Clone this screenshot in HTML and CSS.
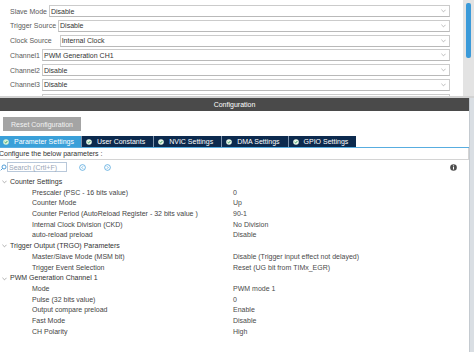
FILE: index.html
```html
<!DOCTYPE html>
<html>
<head>
<meta charset="utf-8">
<link rel="stylesheet" href="styles.css">
</head>
<body>
<div class="top">
  <div class="modes">
    <div class="mode-row"><span class="mode-label">Slave Mode</span><div class="select">Disable<svg class="chev" viewBox="0 0 6 4"><polyline points="0.5,0.5 3,3 5.5,0.5"/></svg></div></div>
    <div class="mode-row"><span class="mode-label">Trigger Source</span><div class="select">Disable<svg class="chev" viewBox="0 0 6 4"><polyline points="0.5,0.5 3,3 5.5,0.5"/></svg></div></div>
    <div class="mode-row"><span class="mode-label wide">Clock Source</span><div class="select">Internal Clock<svg class="chev" viewBox="0 0 6 4"><polyline points="0.5,0.5 3,3 5.5,0.5"/></svg></div></div>
    <div class="mode-row"><span class="mode-label">Channel1</span><div class="select">PWM Generation CH1<svg class="chev" viewBox="0 0 6 4"><polyline points="0.5,0.5 3,3 5.5,0.5"/></svg></div></div>
    <div class="mode-row"><span class="mode-label">Channel2</span><div class="select">Disable<svg class="chev" viewBox="0 0 6 4"><polyline points="0.5,0.5 3,3 5.5,0.5"/></svg></div></div>
    <div class="mode-row"><span class="mode-label">Channel3</span><div class="select">Disable<svg class="chev" viewBox="0 0 6 4"><polyline points="0.5,0.5 3,3 5.5,0.5"/></svg></div></div>
    <div class="mode-row"><span class="mode-label">Channel4</span><div class="select">Disable<svg class="chev" viewBox="0 0 6 4"><polyline points="0.5,0.5 3,3 5.5,0.5"/></svg></div></div>
  </div>
  <div class="vscroll"><div class="thumb"></div></div>
</div>
<div class="lower">
  <div class="lower-main">
    <div class="config-title">Configuration</div>
    <button class="reset-btn">Reset Configuration</button>
    <div class="tabs">
      <div class="tab active"><svg class="tab-ico" viewBox="0 0 6 6"><circle cx="3" cy="3" r="2.8"/><polyline points="1.6,3.1 2.6,4 4.4,2"/></svg>Parameter Settings</div>
      <div class="tab"><svg class="tab-ico" viewBox="0 0 6 6"><circle cx="3" cy="3" r="2.8"/><polyline points="1.6,3.1 2.6,4 4.4,2"/></svg>User Constants</div>
      <div class="tab"><svg class="tab-ico" viewBox="0 0 6 6"><circle cx="3" cy="3" r="2.8"/><polyline points="1.6,3.1 2.6,4 4.4,2"/></svg>NVIC Settings</div>
      <div class="tab"><svg class="tab-ico" viewBox="0 0 6 6"><circle cx="3" cy="3" r="2.8"/><polyline points="1.6,3.1 2.6,4 4.4,2"/></svg>DMA Settings</div>
      <div class="tab"><svg class="tab-ico" viewBox="0 0 6 6"><circle cx="3" cy="3" r="2.8"/><polyline points="1.6,3.1 2.6,4 4.4,2"/></svg>GPIO Settings</div>
    </div>
    <div class="desc">Configure the below parameters :</div>
    <div class="search-row">
      <svg class="mag" viewBox="0 0 8 8"><circle cx="4.6" cy="3.4" r="2.3"/><line x1="2.9" y1="5.1" x2="0.8" y2="7.2"/></svg>
      <div class="search">Search (Crtl+F)</div>
      <svg class="nav nav-prev" viewBox="0 0 8 8"><circle cx="4" cy="4" r="3.3"/><polyline points="4.6,2.6 3.2,4 4.6,5.4"/></svg>
      <svg class="nav nav-next" viewBox="0 0 8 8"><circle cx="4" cy="4" r="3.3"/><polyline points="3.4,2.6 4.8,4 3.4,5.4"/></svg>
      <svg class="info" viewBox="0 0 8 8"><circle cx="4" cy="4" r="3.8"/><rect x="3.4" y="3.3" width="1.2" height="3" fill="#fff"/><circle cx="4" cy="2.1" r="0.7" fill="#fff"/></svg>
    </div>
    <div class="tree">
      <div class="group"><svg class="gchev" viewBox="0 0 6 4"><polyline points="0.5,0.5 3,3 5.5,0.5"/></svg>Counter Settings</div>
      <div class="item"><span class="k">Prescaler (PSC - 16 bits value)</span><span class="v">0</span></div>
      <div class="item"><span class="k">Counter Mode</span><span class="v">Up</span></div>
      <div class="item"><span class="k">Counter Period (AutoReload Register - 32 bits value )</span><span class="v">90-1</span></div>
      <div class="item"><span class="k">Internal Clock Division (CKD)</span><span class="v">No Division</span></div>
      <div class="item"><span class="k">auto-reload preload</span><span class="v">Disable</span></div>
      <div class="group"><svg class="gchev" viewBox="0 0 6 4"><polyline points="0.5,0.5 3,3 5.5,0.5"/></svg>Trigger Output (TRGO) Parameters</div>
      <div class="item"><span class="k">Master/Slave Mode (MSM bit)</span><span class="v">Disable (Trigger input effect not delayed)</span></div>
      <div class="item"><span class="k">Trigger Event Selection</span><span class="v">Reset (UG bit from TIMx_EGR)</span></div>
      <div class="group"><svg class="gchev" viewBox="0 0 6 4"><polyline points="0.5,0.5 3,3 5.5,0.5"/></svg>PWM Generation Channel 1</div>
      <div class="item"><span class="k">Mode</span><span class="v">PWM mode 1</span></div>
      <div class="item"><span class="k">Pulse (32 bits value)</span><span class="v">0</span></div>
      <div class="item"><span class="k">Output compare preload</span><span class="v">Enable</span></div>
      <div class="item"><span class="k">Fast Mode</span><span class="v">Disable</span></div>
      <div class="item"><span class="k">CH Polarity</span><span class="v">High</span></div>
    </div>
  </div>
  <div class="lower-strip"></div>
</div>
</body>
</html>
```

FILE: styles.css
```css
* { box-sizing: border-box; }
html, body { margin: 0; padding: 0; }
body {
  width: 474px;
  height: 352px;
  overflow: hidden;
  background: #fff;
  font-family: "Liberation Sans", Arial, sans-serif;
  font-size: 7px;
  color: #3c3c3c;
}

/* top mode section */
.top {
  display: flex;
  height: 98px;
  border-bottom: 2px solid #d2d2d2;
}
.modes {
  flex: 0 0 463px;
  padding: 5px 13px 0 10px;
  overflow: hidden;
  display: flex;
  flex-direction: column;
  gap: 2.8px;
}
.mode-row {
  display: flex;
  align-items: center;
  height: 12px;
  flex: none;
}
.mode-label {
  color: #5a5a5a;
  margin-right: 2px;
  white-space: nowrap;
}
.mode-label.wide { margin-right: 8px; }
.select {
  flex: 1;
  height: 12px;
  border: 1px solid #cbcbcb;
  border-bottom-color: #b9b9b9;
  display: flex;
  align-items: center;
  padding-left: 1px;
  color: #333;
  white-space: nowrap;
}
.chev {
  width: 5px;
  height: 4px;
  margin-left: auto;
  margin-right: 3px;
  fill: none;
  stroke: #9a9a9a;
  stroke-width: 0.8;
}
.vscroll {
  flex: 1;
  background: #e3e3e3;
  padding: 3px 3px 0 3px;
  border-right: 2px solid #c6c6c6;
}
.thumb {
  width: 5px;
  height: 55px;
  background: #3a9ad9;
  border-radius: 2px;
}

/* lower */
.lower {
  display: flex;
  height: 254px;
}
.lower-main {
  width: 469px;
  flex: none;
}
.lower-strip {
  flex: 1;
  background: #d9dee3;
  border-left: 1px solid #c4cad0;
}
.config-title {
  height: 13px;
  line-height: 13px;
  background: #4a4a4a;
  color: #fff;
  text-align: center;
}
.reset-btn {
  display: block;
  margin: 6px 0 0 3px;
  width: 78px;
  height: 14px;
  padding: 0;
  border: none;
  background: #a4a4a4;
  color: #f3f3f3;
  font-family: inherit;
  font-size: 7px;
}
.tabs {
  margin-top: 5px;
  display: flex;
  height: 12px;
  border-bottom: 1px solid #58ade0;
}
.tab {
  display: flex;
  align-items: center;
  height: 11px;
  padding: 0 8px 0 4px;
  background: #0c2a4e;
  color: #fff;
  white-space: nowrap;
  border-left: 1px solid #7d93ad;
}
.tab.active {
  background: #3aa0d9;
  border-left: none;
  padding: 0 7px 0 3px;
}
.tab-ico {
  width: 6px;
  height: 6px;
  margin-right: 5px;
}
.tab-ico circle { fill: #e9f6e6; }
.tab-ico polyline { fill: none; stroke: #2f9a62; stroke-width: 0.9; }
.tab.active .tab-ico circle { fill: #d8f2d4; }

.desc {
  height: 12px;
  line-height: 11px;
  border: 1px solid #d4d4d4;
  border-top: none;
  border-left: none;
  text-indent: -1px;
  color: #333;
}
.search-row {
  display: flex;
  align-items: center;
  height: 14px;
}
.mag {
  width: 7px;
  height: 7px;
  fill: none;
  stroke: #3a8fd0;
  stroke-width: 1;
}
.search {
  width: 60px;
  height: 10px;
  line-height: 9px;
  border: 1px solid #b8c8da;
  padding-left: 1px;
  color: #9aa6b6;
}
.nav {
  width: 7px;
  height: 7px;
  fill: none;
  stroke: #3a9ad9;
  stroke-width: 0.8;
}
.nav-prev { margin-left: 12px; }
.nav-next { margin-left: 18px; }
.info {
  width: 7px;
  height: 7px;
  margin-left: auto;
  margin-right: 12px;
  fill: #4d4d4d;
}

.tree {
  padding-top: 3px;
}
.group, .item {
  height: 10.7px;
  line-height: 10.7px;
  white-space: nowrap;
}
.group {
  display: flex;
  align-items: center;
  color: #333;
}
.gchev {
  width: 5px;
  height: 4px;
  margin: 0 3px 0 2px;
  fill: none;
  stroke: #8a8a8a;
  stroke-width: 0.8;
}
.item {
  display: grid;
  grid-template-columns: 233px 1fr;
}
.item .k {
  padding-left: 32px;
  color: #444;
}
.item .v {
  color: #4a4a4a;
}
```
